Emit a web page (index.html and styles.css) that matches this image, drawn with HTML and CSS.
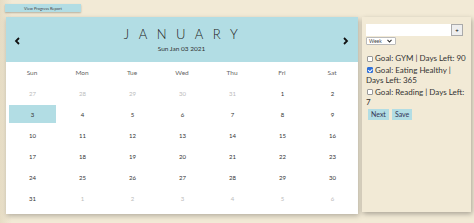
FILE: index.html
```html
<!DOCTYPE html>
<html>
  <head>
    <title>Goal Calendar</title>
    <link rel="stylesheet" href="styles.css">
  </head>
  <body>
    <button class="report-btn">View Progress Report</button>
    <div class="main">
      <div class="calendar">
        <div class="cal-header">
          <svg class="arrow" width="6" height="8" viewBox="0 0 6 8"><path d="M5 1 L2 4 L5 7" fill="none" stroke="#111" stroke-width="1.8"/></svg>
          <div class="month">
            <div class="month-name">JANUARY</div>
            <div class="month-date">Sun Jan 03 2021</div>
          </div>
          <svg class="arrow" width="6" height="8" viewBox="0 0 6 8"><path d="M1 1 L4 4 L1 7" fill="none" stroke="#111" stroke-width="1.8"/></svg>
        </div>
        <div class="cal-grid">
          <div class="wd">Sun</div><div class="wd">Mon</div><div class="wd">Tue</div><div class="wd">Wed</div><div class="wd">Thu</div><div class="wd">Fri</div><div class="wd">Sat</div>
          <div class="day faded">27</div><div class="day faded">28</div><div class="day faded">29</div><div class="day faded">30</div><div class="day faded">31</div><div class="day">1</div><div class="day">2</div>
          <div class="day selected">3</div><div class="day">4</div><div class="day">5</div><div class="day">6</div><div class="day">7</div><div class="day">8</div><div class="day">9</div>
          <div class="day">10</div><div class="day">11</div><div class="day">12</div><div class="day">13</div><div class="day">14</div><div class="day">15</div><div class="day">16</div>
          <div class="day">17</div><div class="day">18</div><div class="day">19</div><div class="day">20</div><div class="day">21</div><div class="day">22</div><div class="day">23</div>
          <div class="day">24</div><div class="day">25</div><div class="day">26</div><div class="day">27</div><div class="day">28</div><div class="day">29</div><div class="day">30</div>
          <div class="day">31</div><div class="day faded">1</div><div class="day faded">2</div><div class="day faded">3</div><div class="day faded">4</div><div class="day faded">5</div><div class="day faded">6</div>
        </div>
      </div>
      <div class="sidebar">
        <div class="add-row">
          <input type="text" class="goal-input">
          <button class="plus-btn">+</button>
        </div>
        <div class="period">
          <span>Week</span>
          <svg width="5" height="4" viewBox="0 0 5 4"><path d="M0.5 0.8 L2.5 3 L4.5 0.8" fill="none" stroke="#333" stroke-width="1.1"/></svg>
        </div>
        <ul class="goals">
          <li><span class="box"></span> Goal: GYM | Days Left: 90</li>
          <li><span class="box checked"></span> Goal: Eating Healthy | Days Left: 365</li>
          <li><span class="box"></span> Goal: Reading | Days Left:<br>7</li>
        </ul>
        <div class="actions">
          <button class="small-btn">Next</button>
          <button class="small-btn">Save</button>
        </div>
      </div>
    </div>
  </body>
</html>
```

FILE: styles.css
```css
body {
  margin: 0;
  padding: 4px 0 0 5px;
  background: linear-gradient(to right, #e6dcc4, #f2ead6 12px);
  font-family: "Lato", "Noto Sans", sans-serif;
  height: 223px;
  box-sizing: border-box;
}

.report-btn {
  display: block;
  width: 76px;
  height: 8px;
  padding: 0;
  border: none;
  background-color: #b2dde4;
  box-shadow: 0 1px 2px rgba(0, 0, 0, 0.25);
  font-family: "Lato", sans-serif;
  font-size: 4px;
  color: #444;
}

.main {
  display: flex;
  gap: 4px;
  margin-top: 5px;
  margin-left: 1px;
}

.calendar {
  width: 352px;
  background-color: #ffffff;
  box-shadow: 1px 2px 5px rgba(0, 0, 0, 0.25);
  padding-bottom: 5px;
}

.cal-header {
  height: 45px;
  background-color: #b2dde4;
  display: flex;
  align-items: center;
  justify-content: space-between;
  padding: 0 9px 0 8px;
}

.arrow {
  margin-top: 3px;
}

.month {
  text-align: center;
  margin-left: 8px;
}

.month-name {
  font-size: 13px;
  font-weight: 300;
  letter-spacing: 9.5px;
  color: #222;
  line-height: 16px;
  margin-top: -1px;
}

.month-date {
  font-size: 6.5px;
  color: #333;
  margin-top: 3px;
  margin-right: 8px;
}

.cal-grid {
  display: grid;
  grid-template-columns: repeat(7, 50px);
  grid-auto-rows: 21px;
  padding: 0 1px;
}

.wd {
  display: flex;
  align-items: center;
  justify-content: center;
  font-size: 6.5px;
  color: #666;
  height: 20px;
}

.day {
  display: flex;
  align-items: center;
  justify-content: center;
  font-size: 6px;
  color: #333;
  margin: 1px 1px 2px 2px;
}

.day.faded {
  color: #bbb;
}

.day.selected {
  background-color: #b2dde4;
}

.sidebar {
  width: 101px;
  height: 188px;
  background-color: #f2ead6;
  box-shadow: 1px 2px 5px rgba(0, 0, 0, 0.3);
  padding: 7px 4px 0 4px;
  font-size: 8px;
  color: #333;
}

.add-row {
  display: flex;
  height: 12px;
}

.goal-input {
  width: 85px;
  height: 12px;
  border: none;
  padding: 0;
  box-sizing: border-box;
}

.plus-btn {
  width: 12px;
  height: 12px;
  padding: 0;
  font-size: 6px;
  border: 1px solid #aaa;
  background-color: #eee;
}

.period {
  display: flex;
  align-items: center;
  justify-content: space-between;
  width: 30px;
  height: 8px;
  box-sizing: border-box;
  margin-top: 1px;
  padding: 0 3px 0 2px;
  border: 1px solid #bbb;
  border-radius: 1px;
  background-color: #fff;
  font-size: 5px;
  color: #444;
}

.goals {
  list-style: none;
  margin: 8px 0 0 0;
  padding: 0;
  line-height: 10.5px;
}

.goals li {
  margin-bottom: 1px;
}

.box {
  display: inline-block;
  position: relative;
  width: 6px;
  height: 6px;
  box-sizing: border-box;
  border: 1px solid #999;
  border-radius: 1px;
  background-color: #fff;
  margin-left: 1px;
  vertical-align: -0.5px;
}

.box.checked {
  background-color: #2f6fd8;
  border-color: #2f6fd8;
}

.box.checked::after {
  content: "";
  position: absolute;
  left: 1px;
  top: 0;
  width: 1.5px;
  height: 2.5px;
  border: solid #fff;
  border-width: 0 1px 1px 0;
  transform: rotate(45deg);
}

.actions {
  display: flex;
  gap: 3px;
  margin-top: 1px;
  padding-left: 2px;
}

.small-btn {
  border: none;
  background-color: #b2dde4;
  font-family: "Lato", sans-serif;
  font-size: 7px;
  color: #335;
  height: 11px;
  padding: 0 3px;
}
```
